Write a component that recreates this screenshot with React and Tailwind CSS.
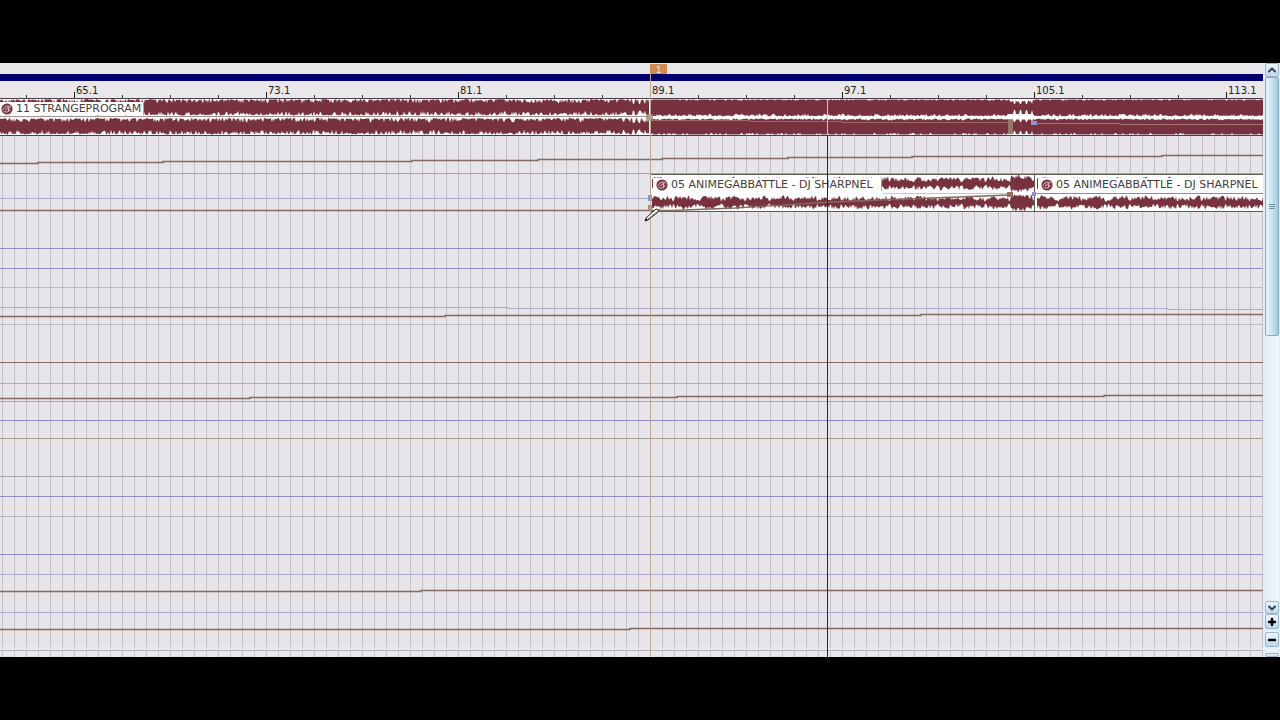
import { Minus, Plus, ChevronUp, ChevronDown } from "lucide-react";

const BROWN = "#84695f";
const BLUE = "#8f89c4";
const PALE_BLUE = "#aeabd0";
const PINK = "#a5757b";

const bars = ["65.1", "73.1", "81.1", "89.1", "97.1", "105.1", "113.1"];

// lines are lists of [x, y] where the value jumps at each x
const emptyTracks = [
  { height: "h-[37px]", border: "border-[#8f89c4]", lines: [] },
  {
    height: "h-[39px]",
    border: "border-[#bdbac0]",
    lines: [{ color: BLUE, points: [[0, 19]] }],
  },
  {
    height: "h-[37px]",
    border: "border-[#bdbac0]",
    lines: [
      { color: PALE_BLUE, points: [[0, 19], [508, 20], [1168, 21]] },
      { color: BROWN, points: [[0, 28], [445, 27], [921, 26]] },
    ],
  },
  { height: "h-[38px]", border: "border-[#84695f]", lines: [] },
  {
    height: "h-[39px]",
    border: "border-[#aaa7b0]",
    lines: [
      { color: PALE_BLUE, points: [[0, 20]] },
      { color: BROWN, points: [[0, 35], [250, 34], [677, 33], [1104, 32]] },
    ],
  },
  {
    height: "h-[37px]",
    border: "border-[#a59c98]",
    lines: [{ color: BLUE, points: [[0, 18]] }],
  },
  { height: "h-[38px]", border: "border-[#aaa7ac]", lines: [] },
  {
    height: "h-[40px]",
    border: "border-[#b6b3b9]",
    lines: [{ color: BLUE, points: [[0, 19]] }],
  },
  { height: "h-[38px]", border: "border-[#8f89c4]", lines: [] },
  {
    height: "h-[58px]",
    border: "border-[#aeabd0]",
    lines: [
      { color: PALE_BLUE, points: [[0, 19]] },
      { color: BROWN, points: [[0, 36], [421, 35]] },
    ],
  },
  {
    height: "h-[34px]",
    border: "border-transparent",
    lines: [{ color: BROWN, points: [[0, 16], [630, 15]] }],
  },
];

const tempoPoints = [
  [0, 27], [38, 26], [162, 26], [163, 25], [288, 25], [412, 24], [538, 23],
  [662, 22], [788, 21], [912, 20], [1036, 20], [1162, 19],
];

function stepPath(points) {
  let d = `M0 ${points[0][1] + 0.5}`;
  points.slice(1).forEach(([x, y]) => {
    d += `H${x}V${y + 0.5}`;
  });
  return d + "H4000";
}

function makeRandom(seed) {
  let s = seed * 7919;
  return () => {
    s = (s * 16807) % 2147483647;
    return s / 2147483647;
  };
}

// outline of one channel, edges(x, random) gives [top, bottom]
function wavePath(from, to, seed, edges) {
  const random = makeRandom(seed);
  const top = [];
  const bottom = [];
  for (let x = from; x <= to; x += 1) {
    const [a, b] = edges(x, random);
    top.push(`${x} ${a.toFixed(1)}`);
    bottom.unshift(`${x} ${b.toFixed(1)}`);
  }
  return `M${top.join("L")}L${bottom.join("L")}Z`;
}

const loud = (first, last) => (x, random) => {
  const spike = random() < 0.35 ? 1.5 + random() * 3 : random() * 1.2;
  const spike2 = random() < 0.35 ? 1.5 + random() * 3 : random() * 1.2;
  if ([633, 634, 639, 640, 645].includes(x)) {
    return [first + 5, last - 5];
  }
  return [first + spike, last - spike2];
};

const upperFull = (x, random) => {
  const a = random() < 0.2 ? 1.6 : 0.5;
  const b = 16.2 + random() * 1.2 - (random() < 0.25 ? 1.5 : 0);
  if (x > 1009 && x < 1033) {
    return x % 6 < 2 ? [5, 11] : [1 + random() * 2, 15];
  }
  return [a, b];
};

const lowerFull = (x, random) => {
  const b = random() < 0.15 ? 34 : 35.5;
  const a = 19.4 + random() * 1.2 + (random() < 0.2 ? 1 : 0);
  if (x > 1009 && x < 1033) {
    return x % 6 < 2 ? [23, 32] : [20.5, 35];
  }
  return [a, b];
};

const quiet = (centre) => (x, random) => {
  const swell = 4.4 + Math.sin(x / 4.1) * 0.6;
  const gap = (x + 2) % 24 < 2 ? 0.45 : 1;
  const hot = x >= 360 && x < 385 ? 2 : 0;
  return [
    centre - (swell + hot + (random() - 0.5) * 4.5) * gap,
    centre + (swell + hot + (random() - 0.5) * 4.5) * gap,
  ];
};

const mainWave =
  wavePath(0, 649, 17, loud(0, 16.5)) +
  wavePath(0, 649, 91, loud(19, 35.5)) +
  wavePath(650, 2600, 33, upperFull) +
  wavePath(650, 2600, 55, lowerFull);
const battleWave =
  wavePath(1, 385, 7, quiet(8.5)) + wavePath(1, 385, 71, quiet(27.5));
const battleWaveAgain =
  wavePath(386, 1900, 12, quiet(8.5)) + wavePath(386, 1900, 43, quiet(27.5));

function Swirl() {
  return (
    <svg viewBox="0 0 12 12" className="size-3 shrink-0" aria-hidden="true">
      <circle cx="6" cy="6" r="5.6" fill="#7c3443" />
      <path
        d="M1.8 6.8C3 3.4 7 2 10 4.2M2.4 8C4.6 9.8 8.4 9.2 9.2 6.2M4 6.8L7.8 4.2L7.2 8"
        fill="none"
        stroke="#ead8dc"
        strokeWidth="0.9"
      />
    </svg>
  );
}

function ClipLabel({ children, className }) {
  return (
    <span
      className={`relative flex h-[13px] w-max items-center gap-[3px] border-r border-[#aaa3a8] bg-white text-[11px] leading-3 whitespace-nowrap text-[#453b42] ${className}`}
    >
      <Swirl />
      {children}
    </span>
  );
}

function Wave({ d, viewStart }) {
  return (
    <svg className="absolute inset-0 size-full overflow-hidden" aria-hidden="true">
      <path d={d} fill="#78323f" transform={`translate(${-viewStart} 0)`} />
    </svg>
  );
}

function Lines({ lines }) {
  return (
    <svg className="absolute inset-0 size-full overflow-hidden" aria-hidden="true">
      {lines.map((line, i) => (
        <path
          key={i}
          d={stepPath(line.points)}
          fill="none"
          stroke={line.color}
          strokeWidth={line.color === BROWN ? 1.5 : 1}
        />
      ))}
    </svg>
  );
}

function MainTrack() {
  return (
    <div className="relative h-[38px] overflow-hidden border-y border-[#4c4046] bg-white">
      <Wave d={mainWave} viewStart={0} />
      <svg className="absolute inset-0 size-full overflow-hidden" aria-hidden="true">
        <path d="M0 17.5H650" stroke="#a2938a" />
        <path d="M650 21.5H750V22.5H842V23.5H1010" fill="none" stroke="#9d6a62" />
        <path d="M1034 24.5H1120V25.5H4000" fill="none" stroke={PINK} />
        <path d="M646 15h7v7h-7zM1008 20h5v15h-5z" fill="#a48673" opacity="0.8" />
        <path d="M1031 22h6v4h-6z" fill="#8f91cb" />
      </svg>
      <div className="pt-[3px]">
        <ClipLabel className="pr-[2px] pl-px">11 STRANGEPROGRAM</ClipLabel>
      </div>
    </div>
  );
}

function BattleTrack() {
  return (
    <div className="relative flex h-[38px] overflow-hidden">
      <div className="w-[650px] shrink-0" />
      <div className="relative w-96 shrink-0 border border-r-0 border-[#5f5a55] bg-white pt-[3px] pl-[2px]">
        <Wave d={battleWave} viewStart={0} />
        <ClipLabel className="pr-2 pl-[3px]">05 ANIMEGABBATTLE - DJ SHARPNEL</ClipLabel>
      </div>
      <div className="relative min-w-0 flex-1 overflow-hidden border-y border-l border-[#5f5a55] bg-white pt-[3px] pl-[3px]">
        <Wave d={battleWaveAgain} viewStart={384} />
        <ClipLabel className="pr-2 pl-[3px]">05 ANIMEGABBATTLE - DJ SHARPNEL</ClipLabel>
      </div>
      <svg className="absolute inset-0 size-full overflow-hidden" aria-hidden="true">
        <path d="M0 24.5H650" stroke={PALE_BLUE} />
        <path d="M0 36.5H672L735 34L830 28L1010 21" fill="none" stroke={BROWN} strokeWidth="1.3" />
        <path d="M883 19.5H1010" stroke="#c9c4c9" />
        <path d="M1036 19.5H4000" stroke="#9b8a84" />
        <path d="M1007 18h6v5h-6z" fill="#94705a" />
        <path d="M648 21h4v6h-4zM1032 18h4v4h-4z" fill="#8f91cb" />
        <path d="M648 31h4v5h-4z" fill="#b08a6b" />
      </svg>
    </div>
  );
}

function Ruler() {
  return (
    <div className="relative flex h-[17px] overflow-hidden bg-[linear-gradient(90deg,#3a3a40_1px,transparent_1px)] bg-[size:48px_3px] bg-[position:26px_100%] bg-repeat-x">
      <div className="w-[74px] shrink-0" />
      {bars.map((bar) => (
        <div key={bar} className="flex w-48 shrink-0 items-end">
          <div className="h-[6px] w-px bg-[#222]" />
          <span className="self-start pt-[4px] pl-px text-[10px] leading-[11px] text-[#222]">
            {bar}
          </span>
        </div>
      ))}
    </div>
  );
}

function BarButton({ label, children, className }) {
  return (
    <button
      type="button"
      aria-label={label}
      className={`flex w-full shrink-0 items-center justify-center rounded-xs border border-[#9db3c8] bg-linear-to-b from-[#eef6fc] to-[#c2d7e9] text-[#35465c] ${className}`}
    >
      {children}
    </button>
  );
}

function ScrollBar() {
  return (
    <div className="flex w-[17px] shrink-0 flex-col bg-[#e4eef6] pr-px pl-[2px]">
      <BarButton label="Scroll up" className="h-[14px]">
        <ChevronUp className="size-3" strokeWidth={4} />
      </BarButton>
      <div className="flex-1 bg-linear-to-r from-[#dfecf5] to-[#f3f8fc]">
        <div className="flex h-[259px] flex-col items-center justify-center gap-px rounded-xs border border-[#8aa9bd] bg-linear-to-r from-[#e6f4fb] via-[#cbe3f1] to-[#a3c9df]">
          <div className="h-px w-[6px] bg-[#7795aa]" />
          <div className="h-px w-[6px] bg-[#7795aa]" />
          <div className="h-px w-[6px] bg-[#7795aa]" />
        </div>
      </div>
      <BarButton label="Scroll down" className="h-[13px]">
        <ChevronDown className="size-3" strokeWidth={4} />
      </BarButton>
      <BarButton label="Zoom in" className="h-[15px]">
        <Plus className="size-[10px] text-black" strokeWidth={6} />
      </BarButton>
      <div className="h-[3px]" />
      <BarButton label="Zoom out" className="h-[15px]">
        <Minus className="size-[10px] text-black" strokeWidth={6} />
      </BarButton>
      <div className="h-[6px]" />
      <BarButton label="Next pane" className="h-[4px]" />
    </div>
  );
}

export default function App() {
  return (
    <div className="flex min-h-screen flex-col justify-center bg-black font-['DejaVu_Sans',sans-serif]">
      <main className="flex w-full overflow-hidden bg-[#e9e7ea]">
        <div className="relative min-w-0 flex-1 overflow-hidden">
          <div className="flex h-[11px] items-end pl-[650px]">
            <button
              type="button"
              className="h-[10px] w-[17px] bg-[#d08c51] text-center text-[9px] leading-[12px] text-[#f7e3cf]"
            >
              1
            </button>
          </div>
          <div className="h-[7px] bg-[#000070]" />
          <Ruler />
          <div className="bg-[#e7e5ea] bg-[linear-gradient(90deg,#c2c0c5_1px,transparent_1px)] bg-[size:12px_100%] bg-[position:2px_0]">
            <MainTrack />
            <div className="relative h-[38px] border-b border-[#aaa994]">
              <Lines lines={[{ color: BROWN, points: tempoPoints }]} />
            </div>
            <BattleTrack />
            {emptyTracks.map((track, i) => (
              <div key={i} className={`relative border-b ${track.height} ${track.border}`}>
                <Lines lines={track.lines} />
              </div>
            ))}
          </div>
          <div className="mt-[3px] h-[7px] border-t border-[#b3b1b6] bg-[linear-gradient(90deg,#c2c0c5_1px,transparent_1px)] bg-[size:12px_100%] bg-[position:2px_0]" />

          {/* locator and playhead */}
          <div className="absolute top-[11px] bottom-0 left-[650px] w-px bg-[#b9a694]" />
          <div className="absolute top-[35px] bottom-0 left-[827px] w-px bg-[#2a262b]" />
          <div className="absolute top-[36px] left-[827px] h-9 w-px bg-[#d9c3c2]" />
          <svg
            viewBox="0 0 16 16"
            className="absolute top-[144px] left-[644px] size-4"
            aria-hidden="true"
          >
            <path d="M1 14L2 11L12 2L15 3L14 5L4 13Z" fill="#fff" stroke="#222" />
            <path d="M1 14L4 13L2.4 11Z" fill="#222" />
            <path d="M4 12L14 4" stroke="#777" />
          </svg>
        </div>
        <ScrollBar />
      </main>
    </div>
  );
}
